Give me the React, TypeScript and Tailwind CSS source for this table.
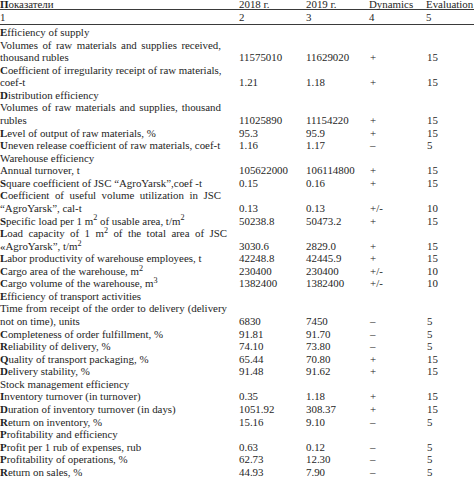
import React from 'react';

type Row = {
  lines: string[];
  bold?: boolean;
  v18?: string;
  v19?: string;
  dyn?: string;
  ev?: string;
  wide?: boolean;
};

const ROWS: Row[] = [
  { lines: ['Efficiency of supply'], bold: true },
  { lines: ['Volumes of raw materials and supplies received,', 'thousand rubles'], v18: '11575010', v19: '11629020', dyn: '+', ev: '15' },
  { lines: ['Coefficient of irregularity receipt of raw materials,', 'coef-t'], bold: true, v18: '1.21', v19: '1.18', dyn: '+', ev: '15' },
  { lines: ['Distribution efficiency'], bold: true },
  { lines: ['Volumes of raw materials and supplies, thousand', 'rubles'], v18: '11025890', v19: '11154220', dyn: '+', ev: '15' },
  { lines: ['Level of output of raw materials, %'], bold: true, v18: '95.3', v19: '95.9', dyn: '+', ev: '15' },
  { lines: ['Uneven release coefficient of raw materials, coef-t'], bold: true, v18: '1.16', v19: '1.17', dyn: '–', ev: '5' },
  { lines: ['Warehouse efficiency'] },
  { lines: ['Annual turnover, t'], v18: '105622000', v19: '106114800', dyn: '+', ev: '15' },
  { lines: ['Square coefficient of JSC “AgroYarsk”,coef -t'], bold: true, v18: '0.15', v19: '0.16', dyn: '+', ev: '15' },
  { lines: ['Coefficient of useful volume utilization in JSC', '“AgroYarsk”, cal-t'], bold: true, v18: '0.13', v19: '0.13', dyn: '+/-', ev: '10' },
  { lines: ['Specific load per 1 m^2 of usable area, t/m^2'], bold: true, v18: '50238.8', v19: '50473.2', dyn: '+', ev: '15' },
  { lines: ['Load capacity of 1 m^2 of the total area of JSC', '«AgroYarsk”, t/m^2'], bold: true, wide: true, v18: '3030.6', v19: '2829.0', dyn: '+', ev: '15' },
  { lines: ['Labor productivity of warehouse employees, t'], bold: true, v18: '42248.8', v19: '42445.9', dyn: '+', ev: '15' },
  { lines: ['Cargo area of the warehouse, m^2'], bold: true, v18: '230400', v19: '230400', dyn: '+/-', ev: '10' },
  { lines: ['Cargo volume of the warehouse, m^3'], bold: true, v18: '1382400', v19: '1382400', dyn: '+/-', ev: '10' },
  { lines: ['Efficiency of transport activities'], bold: true },
  { lines: ['Time from receipt of the order to delivery (delivery', 'not on time), units'], wide: true, v18: '6830', v19: '7450', dyn: '–', ev: '5' },
  { lines: ['Completeness of order fulfillment, %'], bold: true, v18: '91.81', v19: '91.70', dyn: '–', ev: '5' },
  { lines: ['Reliability of delivery, %'], bold: true, v18: '74.10', v19: '73.80', dyn: '–', ev: '5' },
  { lines: ['Quality of transport packaging, %'], bold: true, v18: '65.44', v19: '70.80', dyn: '+', ev: '15' },
  { lines: ['Delivery stability, %'], bold: true, v18: '91.48', v19: '91.62', dyn: '+', ev: '15' },
  { lines: ['Stock management efficiency'] },
  { lines: ['Inventory turnover (in turnover)'], bold: true, v18: '0.35', v19: '1.18', dyn: '+', ev: '15' },
  { lines: ['Duration of inventory turnover (in days)'], bold: true, v18: '1051.92', v19: '308.37', dyn: '+', ev: '15' },
  { lines: ['Return on inventory, %'], bold: true, v18: '15.16', v19: '9.10', dyn: '–', ev: '5' },
  { lines: ['Profitability and efficiency'], bold: true },
  { lines: ['Profit per 1 rub of expenses, rub'], bold: true, v18: '0.63', v19: '0.12', dyn: '–', ev: '5' },
  { lines: ['Profitability of operations, %'], bold: true, v18: '62.73', v19: '12.30', dyn: '–', ev: '5' },
  { lines: ['Return on sales, %'], bold: true, v18: '44.93', v19: '7.90', dyn: '–', ev: '5' },
];

const GRID = 'grid grid-cols-[239px_67px_63px_57px_1fr]';

// "m^2" -> m<sup>2</sup>
function withSup(text: string) {
  const parts = text.split(/\^(\d)/);
  return parts.map((p, i) => (i % 2 === 1 ? <sup key={i}>{p}</sup> : <React.Fragment key={i}>{p}</React.Fragment>));
}

function Label({ row }: { row: Row }) {
  return (
    <div>
      {row.lines.map((line, i) => {
        const isLast = i === row.lines.length - 1;
        const lead = row.bold && i === 0 ? line[0] : '';
        const rest = lead ? line.slice(1) : line;
        return (
          <div
            key={i}
            className={
              isLast
                ? 'whitespace-nowrap'
                : row.wide
                  ? 'whitespace-nowrap w-[227px] text-justify [text-align-last:justify]'
                  : 'whitespace-nowrap w-[221px] text-justify [text-align-last:justify]'
            }
          >
            {lead && <span className="font-bold">{lead}</span>}
            {withSup(rest)}
          </div>
        );
      })}
    </div>
  );
}

export default function App() {
  return (
    <div className="w-[474px] h-[479px] overflow-hidden bg-white text-[#1e1e1e] text-[10.9px] leading-[12.57px] font-['Liberation_Serif','Times_New_Roman',serif]">
      <div className={`${GRID} leading-[9px] h-[10px] border-b border-[#3a3a3a]`}>
        <div><span className="font-bold">П</span>оказатели</div>
        <div>2018 г.</div>
        <div>2019 г.</div>
        <div>Dynamics</div>
        <div className="whitespace-nowrap">Evaluation</div>
      </div>
      <div className={`${GRID} pt-[1px] border-b border-[#3a3a3a]`}>
        <div>1</div>
        <div>2</div>
        <div>3</div>
        <div>4</div>
        <div>5</div>
      </div>
      <div className="pt-[1.5px]">
        {ROWS.map((row, i) => (
          <div key={i} className={`${GRID} items-end`}>
            <Label row={row} />
            <div>{row.v18}</div>
            <div>{row.v19}</div>
            <div className="pl-[1px]">{row.dyn}</div>
            <div className="pl-[1px]">{row.ev}</div>
          </div>
        ))}
      </div>
    </div>
  );
}
